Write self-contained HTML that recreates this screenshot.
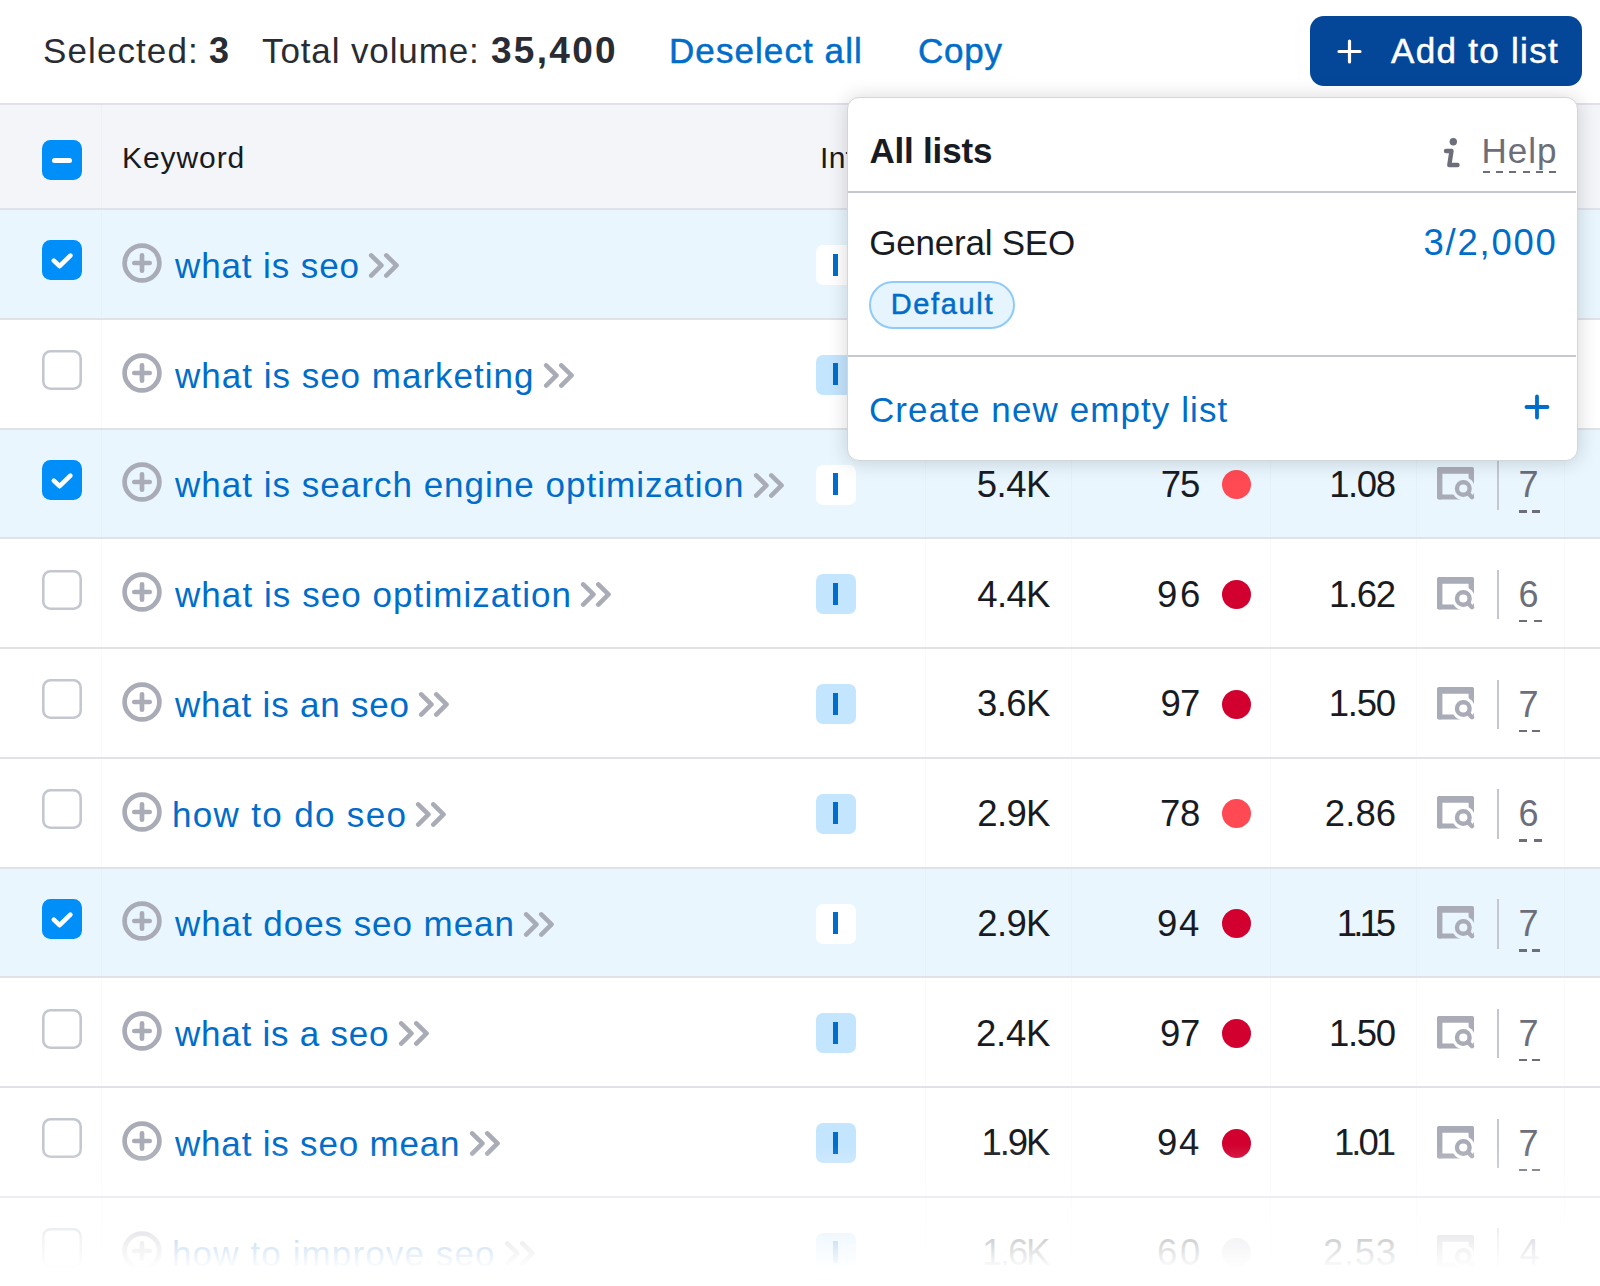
<!DOCTYPE html>
<html><head><meta charset="utf-8"><style>
html,body{margin:0;padding:0;}
body{width:1600px;height:1286px;overflow:hidden;position:relative;background:#fff;font-family:"Liberation Sans", sans-serif;}
.abs{position:absolute;}
svg{display:block;}
.t{position:absolute;white-space:pre;}
.cb{width:40px;height:40px;border-radius:8.5px;box-sizing:border-box;}
.cb.on{background:#008FF8;}
.cb.off{background:#fff;box-shadow:inset 0 0 0 2.6px #C4C7CF;}
</style></head><body>
<div class="abs" style="left:0;top:103px;width:1600px;height:2px;background:#E0E1E9"></div><div class="abs" style="left:0;top:105px;width:1600px;height:103px;background:#F4F5F9"></div><div class="abs" style="left:0;top:208px;width:1600px;height:2px;background:#E0E1E9"></div><div class="abs" style="left:101px;top:105px;width:1px;height:103px;background:rgba(0,0,0,0.02)"></div><div class="abs cb on" style="left:42px;top:140px"><div class="abs" style="left:10px;top:17.5px;width:20px;height:5.5px;border-radius:3px;background:#fff"></div></div><div class="abs" style="left:0;top:210.0px;width:1600px;height:107.75px;background:#E9F6FE"></div><div class="abs" style="left:0;top:317.75px;width:1600px;height:2px;background:#E0E1E9"></div><div class="abs" style="left:101px;top:210.0px;width:1px;height:107.75px;background:rgba(0,0,0,0.02)"></div><div class="abs" style="left:925px;top:210.0px;width:1px;height:107.75px;background:rgba(0,0,0,0.02)"></div><div class="abs" style="left:1071px;top:210.0px;width:1px;height:107.75px;background:rgba(0,0,0,0.02)"></div><div class="abs" style="left:1270px;top:210.0px;width:1px;height:107.75px;background:rgba(0,0,0,0.02)"></div><div class="abs" style="left:1416px;top:210.0px;width:1px;height:107.75px;background:rgba(0,0,0,0.02)"></div><div class="abs" style="left:1564px;top:210.0px;width:1px;height:107.75px;background:rgba(0,0,0,0.02)"></div><div class="abs cb on" style="left:42px;top:240.3px"><svg class="abs" style="left:0;top:0" width="40" height="40" viewBox="0 0 40 40"><path d="M11.8 20.6 L17.6 26.2 L28.4 15.6" fill="none" stroke="#fff" stroke-width="4.6" stroke-linecap="round" stroke-linejoin="round"/></svg></div><div class="abs" style="left:122px;top:242.75px;width:40px;height:40px"><svg width="40" height="40" viewBox="0 0 40 40"><circle cx="20" cy="20" r="17.4" fill="none" stroke="#A9ABB6" stroke-width="4.7"/><path d="M12.3 20 H27.7 M20 12.3 V27.7" stroke="#A9ABB6" stroke-width="4.7" stroke-linecap="round"/></svg></div><div class="abs" style="left:368.2px;top:252.0px;width:34px;height:30px"><svg width="34" height="30" viewBox="0 0 34 30"><path d="M3.2 3.4 L13.4 13.4 L3.2 23.6 M18.3 3.4 L28.5 13.4 L18.3 23.6" fill="none" stroke="#A9ABB6" stroke-width="4.6" stroke-linecap="round" stroke-linejoin="round"/></svg></div><div class="abs" style="left:816px;top:245.0px;width:40px;height:40px;border-radius:7px;background:#FFFFFF"><div class="abs" style="left:17px;top:8.5px;width:4.5px;height:22px;background:#006DCA"></div></div><div class="abs" style="left:0;top:319.75px;width:1600px;height:107.75px;background:#FFFFFF"></div><div class="abs" style="left:0;top:427.5px;width:1600px;height:2px;background:#E0E1E9"></div><div class="abs" style="left:101px;top:319.75px;width:1px;height:107.75px;background:rgba(0,0,0,0.02)"></div><div class="abs" style="left:925px;top:319.75px;width:1px;height:107.75px;background:rgba(0,0,0,0.02)"></div><div class="abs" style="left:1071px;top:319.75px;width:1px;height:107.75px;background:rgba(0,0,0,0.02)"></div><div class="abs" style="left:1270px;top:319.75px;width:1px;height:107.75px;background:rgba(0,0,0,0.02)"></div><div class="abs" style="left:1416px;top:319.75px;width:1px;height:107.75px;background:rgba(0,0,0,0.02)"></div><div class="abs" style="left:1564px;top:319.75px;width:1px;height:107.75px;background:rgba(0,0,0,0.02)"></div><div class="abs cb off" style="left:42px;top:350.05px"></div><div class="abs" style="left:122px;top:352.5px;width:40px;height:40px"><svg width="40" height="40" viewBox="0 0 40 40"><circle cx="20" cy="20" r="17.4" fill="none" stroke="#A9ABB6" stroke-width="4.7"/><path d="M12.3 20 H27.7 M20 12.3 V27.7" stroke="#A9ABB6" stroke-width="4.7" stroke-linecap="round"/></svg></div><div class="abs" style="left:542.7px;top:361.75px;width:34px;height:30px"><svg width="34" height="30" viewBox="0 0 34 30"><path d="M3.2 3.4 L13.4 13.4 L3.2 23.6 M18.3 3.4 L28.5 13.4 L18.3 23.6" fill="none" stroke="#A9ABB6" stroke-width="4.6" stroke-linecap="round" stroke-linejoin="round"/></svg></div><div class="abs" style="left:816px;top:354.75px;width:40px;height:40px;border-radius:7px;background:#C4E5FE"><div class="abs" style="left:17px;top:8.5px;width:4.5px;height:22px;background:#006DCA"></div></div><div class="abs" style="left:0;top:429.5px;width:1600px;height:107.75px;background:#E9F6FE"></div><div class="abs" style="left:0;top:537.25px;width:1600px;height:2px;background:#E0E1E9"></div><div class="abs" style="left:101px;top:429.5px;width:1px;height:107.75px;background:rgba(0,0,0,0.02)"></div><div class="abs" style="left:925px;top:429.5px;width:1px;height:107.75px;background:rgba(0,0,0,0.02)"></div><div class="abs" style="left:1071px;top:429.5px;width:1px;height:107.75px;background:rgba(0,0,0,0.02)"></div><div class="abs" style="left:1270px;top:429.5px;width:1px;height:107.75px;background:rgba(0,0,0,0.02)"></div><div class="abs" style="left:1416px;top:429.5px;width:1px;height:107.75px;background:rgba(0,0,0,0.02)"></div><div class="abs" style="left:1564px;top:429.5px;width:1px;height:107.75px;background:rgba(0,0,0,0.02)"></div><div class="abs cb on" style="left:42px;top:459.8px"><svg class="abs" style="left:0;top:0" width="40" height="40" viewBox="0 0 40 40"><path d="M11.8 20.6 L17.6 26.2 L28.4 15.6" fill="none" stroke="#fff" stroke-width="4.6" stroke-linecap="round" stroke-linejoin="round"/></svg></div><div class="abs" style="left:122px;top:462.25px;width:40px;height:40px"><svg width="40" height="40" viewBox="0 0 40 40"><circle cx="20" cy="20" r="17.4" fill="none" stroke="#A9ABB6" stroke-width="4.7"/><path d="M12.3 20 H27.7 M20 12.3 V27.7" stroke="#A9ABB6" stroke-width="4.7" stroke-linecap="round"/></svg></div><div class="abs" style="left:752.7px;top:471.5px;width:34px;height:30px"><svg width="34" height="30" viewBox="0 0 34 30"><path d="M3.2 3.4 L13.4 13.4 L3.2 23.6 M18.3 3.4 L28.5 13.4 L18.3 23.6" fill="none" stroke="#A9ABB6" stroke-width="4.6" stroke-linecap="round" stroke-linejoin="round"/></svg></div><div class="abs" style="left:816px;top:464.5px;width:40px;height:40px;border-radius:7px;background:#FFFFFF"><div class="abs" style="left:17px;top:8.5px;width:4.5px;height:22px;background:#006DCA"></div></div><div class="abs" style="left:1221.8px;top:470.2px;width:29px;height:29px;border-radius:50%;background:#FF4953"></div><div class="abs" style="left:1437px;top:467.2px;width:38px;height:34px"><svg width="38" height="34" viewBox="0 0 38 34"><defs><mask id="m2"><rect x="0" y="0" width="38" height="34" fill="#fff"/><circle cx="26.3" cy="21.5" r="11.5" fill="#000"/></mask></defs>
<g mask="url(#m2)" fill="#A9ABB6"><rect x="0" y="0" width="37" height="6.8" rx="2.5"/><rect x="0" y="0" width="5.4" height="32.4" rx="2.5"/><rect x="0" y="27.4" width="30" height="5" rx="2.5"/><rect x="31.6" y="0" width="5.4" height="30" rx="2.5"/></g>
<circle cx="26.3" cy="21.5" r="6.3" fill="none" stroke="#A9ABB6" stroke-width="4.4"/><path d="M30.8 26 L35 30.2" stroke="#A9ABB6" stroke-width="4.4" stroke-linecap="round"/></svg></div><div class="abs" style="left:1497px;top:460.0px;width:2px;height:49.5px;background:#C4C7CF"></div><div class="abs" style="left:1519px;top:510.1px;width:7.5px;height:2.5px;background:#6C6E79"></div><div class="abs" style="left:1532px;top:510.1px;width:7.5px;height:2.5px;background:#6C6E79"></div><div class="abs" style="left:0;top:539.25px;width:1600px;height:107.75px;background:#FFFFFF"></div><div class="abs" style="left:0;top:647.0px;width:1600px;height:2px;background:#E0E1E9"></div><div class="abs" style="left:101px;top:539.25px;width:1px;height:107.75px;background:rgba(0,0,0,0.02)"></div><div class="abs" style="left:925px;top:539.25px;width:1px;height:107.75px;background:rgba(0,0,0,0.02)"></div><div class="abs" style="left:1071px;top:539.25px;width:1px;height:107.75px;background:rgba(0,0,0,0.02)"></div><div class="abs" style="left:1270px;top:539.25px;width:1px;height:107.75px;background:rgba(0,0,0,0.02)"></div><div class="abs" style="left:1416px;top:539.25px;width:1px;height:107.75px;background:rgba(0,0,0,0.02)"></div><div class="abs" style="left:1564px;top:539.25px;width:1px;height:107.75px;background:rgba(0,0,0,0.02)"></div><div class="abs cb off" style="left:42px;top:569.55px"></div><div class="abs" style="left:122px;top:572.0px;width:40px;height:40px"><svg width="40" height="40" viewBox="0 0 40 40"><circle cx="20" cy="20" r="17.4" fill="none" stroke="#A9ABB6" stroke-width="4.7"/><path d="M12.3 20 H27.7 M20 12.3 V27.7" stroke="#A9ABB6" stroke-width="4.7" stroke-linecap="round"/></svg></div><div class="abs" style="left:580.2px;top:581.25px;width:34px;height:30px"><svg width="34" height="30" viewBox="0 0 34 30"><path d="M3.2 3.4 L13.4 13.4 L3.2 23.6 M18.3 3.4 L28.5 13.4 L18.3 23.6" fill="none" stroke="#A9ABB6" stroke-width="4.6" stroke-linecap="round" stroke-linejoin="round"/></svg></div><div class="abs" style="left:816px;top:574.25px;width:40px;height:40px;border-radius:7px;background:#C4E5FE"><div class="abs" style="left:17px;top:8.5px;width:4.5px;height:22px;background:#006DCA"></div></div><div class="abs" style="left:1221.8px;top:579.95px;width:29px;height:29px;border-radius:50%;background:#D1002F"></div><div class="abs" style="left:1437px;top:576.95px;width:38px;height:34px"><svg width="38" height="34" viewBox="0 0 38 34"><defs><mask id="m3"><rect x="0" y="0" width="38" height="34" fill="#fff"/><circle cx="26.3" cy="21.5" r="11.5" fill="#000"/></mask></defs>
<g mask="url(#m3)" fill="#A9ABB6"><rect x="0" y="0" width="37" height="6.8" rx="2.5"/><rect x="0" y="0" width="5.4" height="32.4" rx="2.5"/><rect x="0" y="27.4" width="30" height="5" rx="2.5"/><rect x="31.6" y="0" width="5.4" height="30" rx="2.5"/></g>
<circle cx="26.3" cy="21.5" r="6.3" fill="none" stroke="#A9ABB6" stroke-width="4.4"/><path d="M30.8 26 L35 30.2" stroke="#A9ABB6" stroke-width="4.4" stroke-linecap="round"/></svg></div><div class="abs" style="left:1497px;top:569.75px;width:2px;height:49.5px;background:#C4C7CF"></div><div class="abs" style="left:1519px;top:619.85px;width:7.5px;height:2.5px;background:#6C6E79"></div><div class="abs" style="left:1534.2px;top:619.85px;width:7.5px;height:2.5px;background:#6C6E79"></div><div class="abs" style="left:0;top:649.0px;width:1600px;height:107.75px;background:#FFFFFF"></div><div class="abs" style="left:0;top:756.75px;width:1600px;height:2px;background:#E0E1E9"></div><div class="abs" style="left:101px;top:649.0px;width:1px;height:107.75px;background:rgba(0,0,0,0.02)"></div><div class="abs" style="left:925px;top:649.0px;width:1px;height:107.75px;background:rgba(0,0,0,0.02)"></div><div class="abs" style="left:1071px;top:649.0px;width:1px;height:107.75px;background:rgba(0,0,0,0.02)"></div><div class="abs" style="left:1270px;top:649.0px;width:1px;height:107.75px;background:rgba(0,0,0,0.02)"></div><div class="abs" style="left:1416px;top:649.0px;width:1px;height:107.75px;background:rgba(0,0,0,0.02)"></div><div class="abs" style="left:1564px;top:649.0px;width:1px;height:107.75px;background:rgba(0,0,0,0.02)"></div><div class="abs cb off" style="left:42px;top:679.3px"></div><div class="abs" style="left:122px;top:681.75px;width:40px;height:40px"><svg width="40" height="40" viewBox="0 0 40 40"><circle cx="20" cy="20" r="17.4" fill="none" stroke="#A9ABB6" stroke-width="4.7"/><path d="M12.3 20 H27.7 M20 12.3 V27.7" stroke="#A9ABB6" stroke-width="4.7" stroke-linecap="round"/></svg></div><div class="abs" style="left:418.2px;top:691.0px;width:34px;height:30px"><svg width="34" height="30" viewBox="0 0 34 30"><path d="M3.2 3.4 L13.4 13.4 L3.2 23.6 M18.3 3.4 L28.5 13.4 L18.3 23.6" fill="none" stroke="#A9ABB6" stroke-width="4.6" stroke-linecap="round" stroke-linejoin="round"/></svg></div><div class="abs" style="left:816px;top:684.0px;width:40px;height:40px;border-radius:7px;background:#C4E5FE"><div class="abs" style="left:17px;top:8.5px;width:4.5px;height:22px;background:#006DCA"></div></div><div class="abs" style="left:1221.8px;top:689.7px;width:29px;height:29px;border-radius:50%;background:#D1002F"></div><div class="abs" style="left:1437px;top:686.7px;width:38px;height:34px"><svg width="38" height="34" viewBox="0 0 38 34"><defs><mask id="m4"><rect x="0" y="0" width="38" height="34" fill="#fff"/><circle cx="26.3" cy="21.5" r="11.5" fill="#000"/></mask></defs>
<g mask="url(#m4)" fill="#A9ABB6"><rect x="0" y="0" width="37" height="6.8" rx="2.5"/><rect x="0" y="0" width="5.4" height="32.4" rx="2.5"/><rect x="0" y="27.4" width="30" height="5" rx="2.5"/><rect x="31.6" y="0" width="5.4" height="30" rx="2.5"/></g>
<circle cx="26.3" cy="21.5" r="6.3" fill="none" stroke="#A9ABB6" stroke-width="4.4"/><path d="M30.8 26 L35 30.2" stroke="#A9ABB6" stroke-width="4.4" stroke-linecap="round"/></svg></div><div class="abs" style="left:1497px;top:679.5px;width:2px;height:49.5px;background:#C4C7CF"></div><div class="abs" style="left:1519px;top:729.6px;width:7.5px;height:2.5px;background:#6C6E79"></div><div class="abs" style="left:1532px;top:729.6px;width:7.5px;height:2.5px;background:#6C6E79"></div><div class="abs" style="left:0;top:758.75px;width:1600px;height:107.75px;background:#FFFFFF"></div><div class="abs" style="left:0;top:866.5px;width:1600px;height:2px;background:#E0E1E9"></div><div class="abs" style="left:101px;top:758.75px;width:1px;height:107.75px;background:rgba(0,0,0,0.02)"></div><div class="abs" style="left:925px;top:758.75px;width:1px;height:107.75px;background:rgba(0,0,0,0.02)"></div><div class="abs" style="left:1071px;top:758.75px;width:1px;height:107.75px;background:rgba(0,0,0,0.02)"></div><div class="abs" style="left:1270px;top:758.75px;width:1px;height:107.75px;background:rgba(0,0,0,0.02)"></div><div class="abs" style="left:1416px;top:758.75px;width:1px;height:107.75px;background:rgba(0,0,0,0.02)"></div><div class="abs" style="left:1564px;top:758.75px;width:1px;height:107.75px;background:rgba(0,0,0,0.02)"></div><div class="abs cb off" style="left:42px;top:789.05px"></div><div class="abs" style="left:122px;top:791.5px;width:40px;height:40px"><svg width="40" height="40" viewBox="0 0 40 40"><circle cx="20" cy="20" r="17.4" fill="none" stroke="#A9ABB6" stroke-width="4.7"/><path d="M12.3 20 H27.7 M20 12.3 V27.7" stroke="#A9ABB6" stroke-width="4.7" stroke-linecap="round"/></svg></div><div class="abs" style="left:415.2px;top:800.75px;width:34px;height:30px"><svg width="34" height="30" viewBox="0 0 34 30"><path d="M3.2 3.4 L13.4 13.4 L3.2 23.6 M18.3 3.4 L28.5 13.4 L18.3 23.6" fill="none" stroke="#A9ABB6" stroke-width="4.6" stroke-linecap="round" stroke-linejoin="round"/></svg></div><div class="abs" style="left:816px;top:793.75px;width:40px;height:40px;border-radius:7px;background:#C4E5FE"><div class="abs" style="left:17px;top:8.5px;width:4.5px;height:22px;background:#006DCA"></div></div><div class="abs" style="left:1221.8px;top:799.45px;width:29px;height:29px;border-radius:50%;background:#FF4953"></div><div class="abs" style="left:1437px;top:796.45px;width:38px;height:34px"><svg width="38" height="34" viewBox="0 0 38 34"><defs><mask id="m5"><rect x="0" y="0" width="38" height="34" fill="#fff"/><circle cx="26.3" cy="21.5" r="11.5" fill="#000"/></mask></defs>
<g mask="url(#m5)" fill="#A9ABB6"><rect x="0" y="0" width="37" height="6.8" rx="2.5"/><rect x="0" y="0" width="5.4" height="32.4" rx="2.5"/><rect x="0" y="27.4" width="30" height="5" rx="2.5"/><rect x="31.6" y="0" width="5.4" height="30" rx="2.5"/></g>
<circle cx="26.3" cy="21.5" r="6.3" fill="none" stroke="#A9ABB6" stroke-width="4.4"/><path d="M30.8 26 L35 30.2" stroke="#A9ABB6" stroke-width="4.4" stroke-linecap="round"/></svg></div><div class="abs" style="left:1497px;top:789.25px;width:2px;height:49.5px;background:#C4C7CF"></div><div class="abs" style="left:1519px;top:839.35px;width:7.5px;height:2.5px;background:#6C6E79"></div><div class="abs" style="left:1534.2px;top:839.35px;width:7.5px;height:2.5px;background:#6C6E79"></div><div class="abs" style="left:0;top:868.5px;width:1600px;height:107.75px;background:#E9F6FE"></div><div class="abs" style="left:0;top:976.25px;width:1600px;height:2px;background:#E0E1E9"></div><div class="abs" style="left:101px;top:868.5px;width:1px;height:107.75px;background:rgba(0,0,0,0.02)"></div><div class="abs" style="left:925px;top:868.5px;width:1px;height:107.75px;background:rgba(0,0,0,0.02)"></div><div class="abs" style="left:1071px;top:868.5px;width:1px;height:107.75px;background:rgba(0,0,0,0.02)"></div><div class="abs" style="left:1270px;top:868.5px;width:1px;height:107.75px;background:rgba(0,0,0,0.02)"></div><div class="abs" style="left:1416px;top:868.5px;width:1px;height:107.75px;background:rgba(0,0,0,0.02)"></div><div class="abs" style="left:1564px;top:868.5px;width:1px;height:107.75px;background:rgba(0,0,0,0.02)"></div><div class="abs cb on" style="left:42px;top:898.8px"><svg class="abs" style="left:0;top:0" width="40" height="40" viewBox="0 0 40 40"><path d="M11.8 20.6 L17.6 26.2 L28.4 15.6" fill="none" stroke="#fff" stroke-width="4.6" stroke-linecap="round" stroke-linejoin="round"/></svg></div><div class="abs" style="left:122px;top:901.25px;width:40px;height:40px"><svg width="40" height="40" viewBox="0 0 40 40"><circle cx="20" cy="20" r="17.4" fill="none" stroke="#A9ABB6" stroke-width="4.7"/><path d="M12.3 20 H27.7 M20 12.3 V27.7" stroke="#A9ABB6" stroke-width="4.7" stroke-linecap="round"/></svg></div><div class="abs" style="left:523.2px;top:910.5px;width:34px;height:30px"><svg width="34" height="30" viewBox="0 0 34 30"><path d="M3.2 3.4 L13.4 13.4 L3.2 23.6 M18.3 3.4 L28.5 13.4 L18.3 23.6" fill="none" stroke="#A9ABB6" stroke-width="4.6" stroke-linecap="round" stroke-linejoin="round"/></svg></div><div class="abs" style="left:816px;top:903.5px;width:40px;height:40px;border-radius:7px;background:#FFFFFF"><div class="abs" style="left:17px;top:8.5px;width:4.5px;height:22px;background:#006DCA"></div></div><div class="abs" style="left:1221.8px;top:909.2px;width:29px;height:29px;border-radius:50%;background:#D1002F"></div><div class="abs" style="left:1437px;top:906.2px;width:38px;height:34px"><svg width="38" height="34" viewBox="0 0 38 34"><defs><mask id="m6"><rect x="0" y="0" width="38" height="34" fill="#fff"/><circle cx="26.3" cy="21.5" r="11.5" fill="#000"/></mask></defs>
<g mask="url(#m6)" fill="#A9ABB6"><rect x="0" y="0" width="37" height="6.8" rx="2.5"/><rect x="0" y="0" width="5.4" height="32.4" rx="2.5"/><rect x="0" y="27.4" width="30" height="5" rx="2.5"/><rect x="31.6" y="0" width="5.4" height="30" rx="2.5"/></g>
<circle cx="26.3" cy="21.5" r="6.3" fill="none" stroke="#A9ABB6" stroke-width="4.4"/><path d="M30.8 26 L35 30.2" stroke="#A9ABB6" stroke-width="4.4" stroke-linecap="round"/></svg></div><div class="abs" style="left:1497px;top:899.0px;width:2px;height:49.5px;background:#C4C7CF"></div><div class="abs" style="left:1519px;top:949.1px;width:7.5px;height:2.5px;background:#6C6E79"></div><div class="abs" style="left:1532px;top:949.1px;width:7.5px;height:2.5px;background:#6C6E79"></div><div class="abs" style="left:0;top:978.25px;width:1600px;height:107.75px;background:#FFFFFF"></div><div class="abs" style="left:0;top:1086.0px;width:1600px;height:2px;background:#E0E1E9"></div><div class="abs" style="left:101px;top:978.25px;width:1px;height:107.75px;background:rgba(0,0,0,0.02)"></div><div class="abs" style="left:925px;top:978.25px;width:1px;height:107.75px;background:rgba(0,0,0,0.02)"></div><div class="abs" style="left:1071px;top:978.25px;width:1px;height:107.75px;background:rgba(0,0,0,0.02)"></div><div class="abs" style="left:1270px;top:978.25px;width:1px;height:107.75px;background:rgba(0,0,0,0.02)"></div><div class="abs" style="left:1416px;top:978.25px;width:1px;height:107.75px;background:rgba(0,0,0,0.02)"></div><div class="abs" style="left:1564px;top:978.25px;width:1px;height:107.75px;background:rgba(0,0,0,0.02)"></div><div class="abs cb off" style="left:42px;top:1008.55px"></div><div class="abs" style="left:122px;top:1011.0px;width:40px;height:40px"><svg width="40" height="40" viewBox="0 0 40 40"><circle cx="20" cy="20" r="17.4" fill="none" stroke="#A9ABB6" stroke-width="4.7"/><path d="M12.3 20 H27.7 M20 12.3 V27.7" stroke="#A9ABB6" stroke-width="4.7" stroke-linecap="round"/></svg></div><div class="abs" style="left:397.7px;top:1020.25px;width:34px;height:30px"><svg width="34" height="30" viewBox="0 0 34 30"><path d="M3.2 3.4 L13.4 13.4 L3.2 23.6 M18.3 3.4 L28.5 13.4 L18.3 23.6" fill="none" stroke="#A9ABB6" stroke-width="4.6" stroke-linecap="round" stroke-linejoin="round"/></svg></div><div class="abs" style="left:816px;top:1013.25px;width:40px;height:40px;border-radius:7px;background:#C4E5FE"><div class="abs" style="left:17px;top:8.5px;width:4.5px;height:22px;background:#006DCA"></div></div><div class="abs" style="left:1221.8px;top:1018.95px;width:29px;height:29px;border-radius:50%;background:#D1002F"></div><div class="abs" style="left:1437px;top:1015.95px;width:38px;height:34px"><svg width="38" height="34" viewBox="0 0 38 34"><defs><mask id="m7"><rect x="0" y="0" width="38" height="34" fill="#fff"/><circle cx="26.3" cy="21.5" r="11.5" fill="#000"/></mask></defs>
<g mask="url(#m7)" fill="#A9ABB6"><rect x="0" y="0" width="37" height="6.8" rx="2.5"/><rect x="0" y="0" width="5.4" height="32.4" rx="2.5"/><rect x="0" y="27.4" width="30" height="5" rx="2.5"/><rect x="31.6" y="0" width="5.4" height="30" rx="2.5"/></g>
<circle cx="26.3" cy="21.5" r="6.3" fill="none" stroke="#A9ABB6" stroke-width="4.4"/><path d="M30.8 26 L35 30.2" stroke="#A9ABB6" stroke-width="4.4" stroke-linecap="round"/></svg></div><div class="abs" style="left:1497px;top:1008.75px;width:2px;height:49.5px;background:#C4C7CF"></div><div class="abs" style="left:1519px;top:1058.85px;width:7.5px;height:2.5px;background:#6C6E79"></div><div class="abs" style="left:1532px;top:1058.85px;width:7.5px;height:2.5px;background:#6C6E79"></div><div class="abs" style="left:0;top:1088.0px;width:1600px;height:107.75px;background:#FFFFFF"></div><div class="abs" style="left:0;top:1195.75px;width:1600px;height:2px;background:#E0E1E9"></div><div class="abs" style="left:101px;top:1088.0px;width:1px;height:107.75px;background:rgba(0,0,0,0.02)"></div><div class="abs" style="left:925px;top:1088.0px;width:1px;height:107.75px;background:rgba(0,0,0,0.02)"></div><div class="abs" style="left:1071px;top:1088.0px;width:1px;height:107.75px;background:rgba(0,0,0,0.02)"></div><div class="abs" style="left:1270px;top:1088.0px;width:1px;height:107.75px;background:rgba(0,0,0,0.02)"></div><div class="abs" style="left:1416px;top:1088.0px;width:1px;height:107.75px;background:rgba(0,0,0,0.02)"></div><div class="abs" style="left:1564px;top:1088.0px;width:1px;height:107.75px;background:rgba(0,0,0,0.02)"></div><div class="abs cb off" style="left:42px;top:1118.3px"></div><div class="abs" style="left:122px;top:1120.75px;width:40px;height:40px"><svg width="40" height="40" viewBox="0 0 40 40"><circle cx="20" cy="20" r="17.4" fill="none" stroke="#A9ABB6" stroke-width="4.7"/><path d="M12.3 20 H27.7 M20 12.3 V27.7" stroke="#A9ABB6" stroke-width="4.7" stroke-linecap="round"/></svg></div><div class="abs" style="left:468.7px;top:1130.0px;width:34px;height:30px"><svg width="34" height="30" viewBox="0 0 34 30"><path d="M3.2 3.4 L13.4 13.4 L3.2 23.6 M18.3 3.4 L28.5 13.4 L18.3 23.6" fill="none" stroke="#A9ABB6" stroke-width="4.6" stroke-linecap="round" stroke-linejoin="round"/></svg></div><div class="abs" style="left:816px;top:1123.0px;width:40px;height:40px;border-radius:7px;background:#C4E5FE"><div class="abs" style="left:17px;top:8.5px;width:4.5px;height:22px;background:#006DCA"></div></div><div class="abs" style="left:1221.8px;top:1128.7px;width:29px;height:29px;border-radius:50%;background:#D1002F"></div><div class="abs" style="left:1437px;top:1125.7px;width:38px;height:34px"><svg width="38" height="34" viewBox="0 0 38 34"><defs><mask id="m8"><rect x="0" y="0" width="38" height="34" fill="#fff"/><circle cx="26.3" cy="21.5" r="11.5" fill="#000"/></mask></defs>
<g mask="url(#m8)" fill="#A9ABB6"><rect x="0" y="0" width="37" height="6.8" rx="2.5"/><rect x="0" y="0" width="5.4" height="32.4" rx="2.5"/><rect x="0" y="27.4" width="30" height="5" rx="2.5"/><rect x="31.6" y="0" width="5.4" height="30" rx="2.5"/></g>
<circle cx="26.3" cy="21.5" r="6.3" fill="none" stroke="#A9ABB6" stroke-width="4.4"/><path d="M30.8 26 L35 30.2" stroke="#A9ABB6" stroke-width="4.4" stroke-linecap="round"/></svg></div><div class="abs" style="left:1497px;top:1118.5px;width:2px;height:49.5px;background:#C4C7CF"></div><div class="abs" style="left:1519px;top:1168.6px;width:7.5px;height:2.5px;background:#6C6E79"></div><div class="abs" style="left:1532px;top:1168.6px;width:7.5px;height:2.5px;background:#6C6E79"></div><div class="abs" style="left:0;top:1197.75px;width:1600px;height:107.75px;background:#FFFFFF"></div><div class="abs" style="left:0;top:1305.5px;width:1600px;height:2px;background:#E0E1E9"></div><div class="abs" style="left:101px;top:1197.75px;width:1px;height:107.75px;background:rgba(0,0,0,0.02)"></div><div class="abs" style="left:925px;top:1197.75px;width:1px;height:107.75px;background:rgba(0,0,0,0.02)"></div><div class="abs" style="left:1071px;top:1197.75px;width:1px;height:107.75px;background:rgba(0,0,0,0.02)"></div><div class="abs" style="left:1270px;top:1197.75px;width:1px;height:107.75px;background:rgba(0,0,0,0.02)"></div><div class="abs" style="left:1416px;top:1197.75px;width:1px;height:107.75px;background:rgba(0,0,0,0.02)"></div><div class="abs" style="left:1564px;top:1197.75px;width:1px;height:107.75px;background:rgba(0,0,0,0.02)"></div><div class="abs cb off" style="left:42px;top:1228.05px"></div><div class="abs" style="left:122px;top:1230.5px;width:40px;height:40px"><svg width="40" height="40" viewBox="0 0 40 40"><circle cx="20" cy="20" r="17.4" fill="none" stroke="#A9ABB6" stroke-width="4.7"/><path d="M12.3 20 H27.7 M20 12.3 V27.7" stroke="#A9ABB6" stroke-width="4.7" stroke-linecap="round"/></svg></div><div class="abs" style="left:503.7px;top:1239.75px;width:34px;height:30px"><svg width="34" height="30" viewBox="0 0 34 30"><path d="M3.2 3.4 L13.4 13.4 L3.2 23.6 M18.3 3.4 L28.5 13.4 L18.3 23.6" fill="none" stroke="#A9ABB6" stroke-width="4.6" stroke-linecap="round" stroke-linejoin="round"/></svg></div><div class="abs" style="left:816px;top:1232.75px;width:40px;height:40px;border-radius:7px;background:#C4E5FE"><div class="abs" style="left:17px;top:8.5px;width:4.5px;height:22px;background:#006DCA"></div></div><div class="abs" style="left:1221.8px;top:1238.45px;width:29px;height:29px;border-radius:50%;background:#C7C9D1"></div><div class="abs" style="left:1437px;top:1235.45px;width:38px;height:34px"><svg width="38" height="34" viewBox="0 0 38 34"><defs><mask id="m9"><rect x="0" y="0" width="38" height="34" fill="#fff"/><circle cx="26.3" cy="21.5" r="11.5" fill="#000"/></mask></defs>
<g mask="url(#m9)" fill="#A9ABB6"><rect x="0" y="0" width="37" height="6.8" rx="2.5"/><rect x="0" y="0" width="5.4" height="32.4" rx="2.5"/><rect x="0" y="27.4" width="30" height="5" rx="2.5"/><rect x="31.6" y="0" width="5.4" height="30" rx="2.5"/></g>
<circle cx="26.3" cy="21.5" r="6.3" fill="none" stroke="#A9ABB6" stroke-width="4.4"/><path d="M30.8 26 L35 30.2" stroke="#A9ABB6" stroke-width="4.4" stroke-linecap="round"/></svg></div><div class="abs" style="left:1497px;top:1228.25px;width:2px;height:49.5px;background:#C4C7CF"></div><div class="abs" style="left:1519px;top:1278.35px;width:7.5px;height:2.5px;background:#6C6E79"></div><div class="abs" style="left:1534.2px;top:1278.35px;width:7.5px;height:2.5px;background:#6C6E79"></div>
<div class="t" style="left:43.00px;top:33.37px;font-size:35px;line-height:35px;color:#2A2C33;letter-spacing:1.099px;">Selected:</div><div class="t" style="left:209.00px;top:32.52px;font-size:36px;line-height:36px;color:#2A2C33;letter-spacing:1.000px;font-weight:700;">3</div><div class="t" style="left:262.00px;top:33.37px;font-size:35px;line-height:35px;color:#2A2C33;letter-spacing:0.877px;">Total volume:</div><div class="t" style="left:491.00px;top:31.67px;font-size:37px;line-height:37px;color:#2A2C33;letter-spacing:2.282px;font-weight:700;">35,400</div><div class="t" style="left:669.00px;top:33.37px;font-size:35px;line-height:35px;color:#006DCA;letter-spacing:1.078px;-webkit-text-stroke:0.5px #006DCA;">Deselect all</div><div class="t" style="left:918.00px;top:33.37px;font-size:35px;line-height:35px;color:#006DCA;letter-spacing:0.764px;-webkit-text-stroke:0.5px #006DCA;">Copy</div><div class="t" style="left:122.00px;top:142.60px;font-size:30px;line-height:30px;color:#191B23;letter-spacing:0.928px;">Keyword</div><div class="t" style="left:820.00px;top:142.60px;font-size:30px;line-height:30px;color:#191B23;letter-spacing:0.300px;">Intent</div><div class="t" style="left:175.00px;top:247.97px;font-size:35px;line-height:35px;color:#006DCA;letter-spacing:0.888px;">what is seo</div><div class="t" style="left:175.00px;top:357.72px;font-size:35px;line-height:35px;color:#006DCA;letter-spacing:0.999px;">what is seo marketing</div><div class="t" style="left:175.00px;top:467.47px;font-size:35px;line-height:35px;color:#006DCA;letter-spacing:1.014px;">what is search engine optimization</div><div class="t" style="left:976.80px;top:466.80px;font-size:36.5px;line-height:36.5px;color:#191B23;letter-spacing:-0.513px;">5.4K</div><div class="t" style="left:1160.70px;top:466.80px;font-size:36.5px;line-height:36.5px;color:#191B23;letter-spacing:-1.000px;">75</div><div class="t" style="left:1329.20px;top:466.80px;font-size:36.5px;line-height:36.5px;color:#191B23;letter-spacing:-1.380px;">1.08</div><div class="t" style="left:1518.50px;top:467.02px;font-size:36px;line-height:36px;color:#6C6E79;letter-spacing:0.000px;">7</div><div class="t" style="left:175.00px;top:577.22px;font-size:35px;line-height:35px;color:#006DCA;letter-spacing:1.061px;">what is seo optimization</div><div class="t" style="left:977.30px;top:576.55px;font-size:36.5px;line-height:36.5px;color:#191B23;letter-spacing:-0.680px;">4.4K</div><div class="t" style="left:1157.00px;top:576.55px;font-size:36.5px;line-height:36.5px;color:#191B23;letter-spacing:2.700px;">96</div><div class="t" style="left:1329.00px;top:576.55px;font-size:36.5px;line-height:36.5px;color:#191B23;letter-spacing:-1.313px;">1.62</div><div class="t" style="left:1518.50px;top:576.77px;font-size:36px;line-height:36px;color:#6C6E79;letter-spacing:0.000px;">6</div><div class="t" style="left:175.00px;top:686.97px;font-size:35px;line-height:35px;color:#006DCA;letter-spacing:0.787px;">what is an seo</div><div class="t" style="left:977.00px;top:686.30px;font-size:36.5px;line-height:36.5px;color:#191B23;letter-spacing:-0.580px;">3.6K</div><div class="t" style="left:1160.50px;top:686.30px;font-size:36.5px;line-height:36.5px;color:#191B23;letter-spacing:-0.800px;">97</div><div class="t" style="left:1328.70px;top:686.30px;font-size:36.5px;line-height:36.5px;color:#191B23;letter-spacing:-1.213px;">1.50</div><div class="t" style="left:1518.50px;top:686.52px;font-size:36px;line-height:36px;color:#6C6E79;letter-spacing:0.000px;">7</div><div class="t" style="left:172.00px;top:796.72px;font-size:35px;line-height:35px;color:#006DCA;letter-spacing:1.336px;">how to do seo</div><div class="t" style="left:977.30px;top:796.05px;font-size:36.5px;line-height:36.5px;color:#191B23;letter-spacing:-0.680px;">2.9K</div><div class="t" style="left:1160.00px;top:796.05px;font-size:36.5px;line-height:36.5px;color:#191B23;letter-spacing:-0.300px;">78</div><div class="t" style="left:1324.80px;top:796.05px;font-size:36.5px;line-height:36.5px;color:#191B23;letter-spacing:0.087px;">2.86</div><div class="t" style="left:1518.50px;top:796.27px;font-size:36px;line-height:36px;color:#6C6E79;letter-spacing:0.000px;">6</div><div class="t" style="left:175.00px;top:906.47px;font-size:35px;line-height:35px;color:#006DCA;letter-spacing:0.940px;">what does seo mean</div><div class="t" style="left:977.30px;top:905.80px;font-size:36.5px;line-height:36.5px;color:#191B23;letter-spacing:-0.680px;">2.9K</div><div class="t" style="left:1157.00px;top:905.80px;font-size:36.5px;line-height:36.5px;color:#191B23;letter-spacing:1.700px;">94</div><div class="t" style="left:1336.80px;top:905.80px;font-size:36.5px;line-height:36.5px;color:#191B23;letter-spacing:-3.913px;">1.15</div><div class="t" style="left:1518.50px;top:906.02px;font-size:36px;line-height:36px;color:#6C6E79;letter-spacing:0.000px;">7</div><div class="t" style="left:175.00px;top:1016.22px;font-size:35px;line-height:35px;color:#006DCA;letter-spacing:0.766px;">what is a seo</div><div class="t" style="left:976.10px;top:1015.55px;font-size:36.5px;line-height:36.5px;color:#191B23;letter-spacing:-0.280px;">2.4K</div><div class="t" style="left:1160.00px;top:1015.55px;font-size:36.5px;line-height:36.5px;color:#191B23;letter-spacing:-0.300px;">97</div><div class="t" style="left:1328.90px;top:1015.55px;font-size:36.5px;line-height:36.5px;color:#191B23;letter-spacing:-1.280px;">1.50</div><div class="t" style="left:1518.50px;top:1015.77px;font-size:36px;line-height:36px;color:#6C6E79;letter-spacing:0.000px;">7</div><div class="t" style="left:175.00px;top:1125.97px;font-size:35px;line-height:35px;color:#006DCA;letter-spacing:0.807px;">what is seo mean</div><div class="t" style="left:981.60px;top:1125.30px;font-size:36.5px;line-height:36.5px;color:#191B23;letter-spacing:-2.113px;">1.9K</div><div class="t" style="left:1157.00px;top:1125.30px;font-size:36.5px;line-height:36.5px;color:#191B23;letter-spacing:1.700px;">94</div><div class="t" style="left:1333.90px;top:1125.30px;font-size:36.5px;line-height:36.5px;color:#191B23;letter-spacing:-2.947px;">1.01</div><div class="t" style="left:1518.50px;top:1125.52px;font-size:36px;line-height:36px;color:#6C6E79;letter-spacing:0.000px;">7</div><div class="t" style="left:172.00px;top:1235.72px;font-size:35px;line-height:35px;color:#006DCA;letter-spacing:1.117px;">how to improve seo</div><div class="t" style="left:982.00px;top:1235.05px;font-size:36.5px;line-height:36.5px;color:#191B23;letter-spacing:-2.247px;">1.6K</div><div class="t" style="left:1157.00px;top:1235.05px;font-size:36.5px;line-height:36.5px;color:#191B23;letter-spacing:2.700px;">60</div><div class="t" style="left:1323.00px;top:1235.05px;font-size:36.5px;line-height:36.5px;color:#191B23;letter-spacing:0.687px;">2.53</div><div class="t" style="left:1519.50px;top:1235.27px;font-size:36px;line-height:36px;color:#6C6E79;letter-spacing:0.000px;">4</div>
<div class="abs" style="left:0;top:1145px;width:1600px;height:141px;background:linear-gradient(to bottom, rgba(255,255,255,0) 0%, rgba(255,255,255,0.5) 45%, rgba(255,255,255,0.8) 67%, #fff 88%)"></div>
<div class="abs" style="left:1310px;top:16px;width:272px;height:70px;border-radius:14px;background:#044698"></div><svg class="abs" style="left:1336px;top:38px" width="27" height="27" viewBox="0 0 27 27"><path d="M13.5 3 V24 M3 13.5 H24" stroke="#fff" stroke-width="3.2" stroke-linecap="round"/></svg>
<div class="t" style="left:1391.00px;top:33.37px;font-size:35px;line-height:35px;color:#FFFFFF;letter-spacing:1.304px;-webkit-text-stroke:0.5px #FFFFFF;">Add to list</div>
<div class="abs" style="left:847px;top:97px;width:731px;height:364px;box-sizing:border-box;border:1.5px solid #D3D5DC;border-radius:12px;background:#fff;box-shadow:0 1px 20px rgba(25,27,35,0.18)"></div>
<div class="abs" style="left:848px;top:190.5px;width:728px;height:2px;background:#C6C8D0"></div>
<div class="abs" style="left:848px;top:355.3px;width:728px;height:2px;background:#C6C8D0"></div>
<svg class="abs" style="left:1440px;top:134px" width="24" height="38" viewBox="0 0 24 38"><circle cx="13.3" cy="7.8" r="3.7" fill="#6C6E79"/><path d="M6 17 H11.5 L9.3 31 H17.5" fill="none" stroke="#6C6E79" stroke-width="4.4" stroke-linecap="round" stroke-linejoin="round"/></svg>
<div class="abs" style="left:1483px;top:170.8px;width:73px;height:2.4px;background:repeating-linear-gradient(90deg,#6C6E79 0 7px,transparent 7px 13.2px)"></div>
<div class="abs" style="left:868.7px;top:280.5px;width:146.3px;height:48.7px;box-sizing:border-box;border-radius:25px;background:#E6F4FE;border:2px solid #8FCAF8"></div>
<svg class="abs" style="left:1523px;top:393px" width="28" height="28" viewBox="0 0 28 28"><path d="M14 3.5 V24.5 M3.5 14 H24.5" stroke="#006DCA" stroke-width="3.8" stroke-linecap="round"/></svg>

<div class="t" style="left:869.40px;top:133.37px;font-size:35px;line-height:35px;color:#191B23;letter-spacing:-0.190px;font-weight:700;">All lists</div><div class="t" style="left:1481.50px;top:133.37px;font-size:35px;line-height:35px;color:#6C6E79;letter-spacing:0.994px;">Help</div><div class="t" style="left:869.20px;top:225.37px;font-size:35px;line-height:35px;color:#191B23;letter-spacing:-0.213px;">General SEO</div><div class="t" style="left:1423.40px;top:224.50px;font-size:36.5px;line-height:36.5px;color:#006DCA;letter-spacing:1.787px;">3/2,000</div><div class="t" style="left:890.70px;top:290.45px;font-size:29px;line-height:29px;color:#006DCA;letter-spacing:1.645px;-webkit-text-stroke:0.5px #006DCA;">Default</div><div class="t" style="left:869.00px;top:392.37px;font-size:35px;line-height:35px;color:#006DCA;letter-spacing:1.085px;">Create new empty list</div>
</body></html>
